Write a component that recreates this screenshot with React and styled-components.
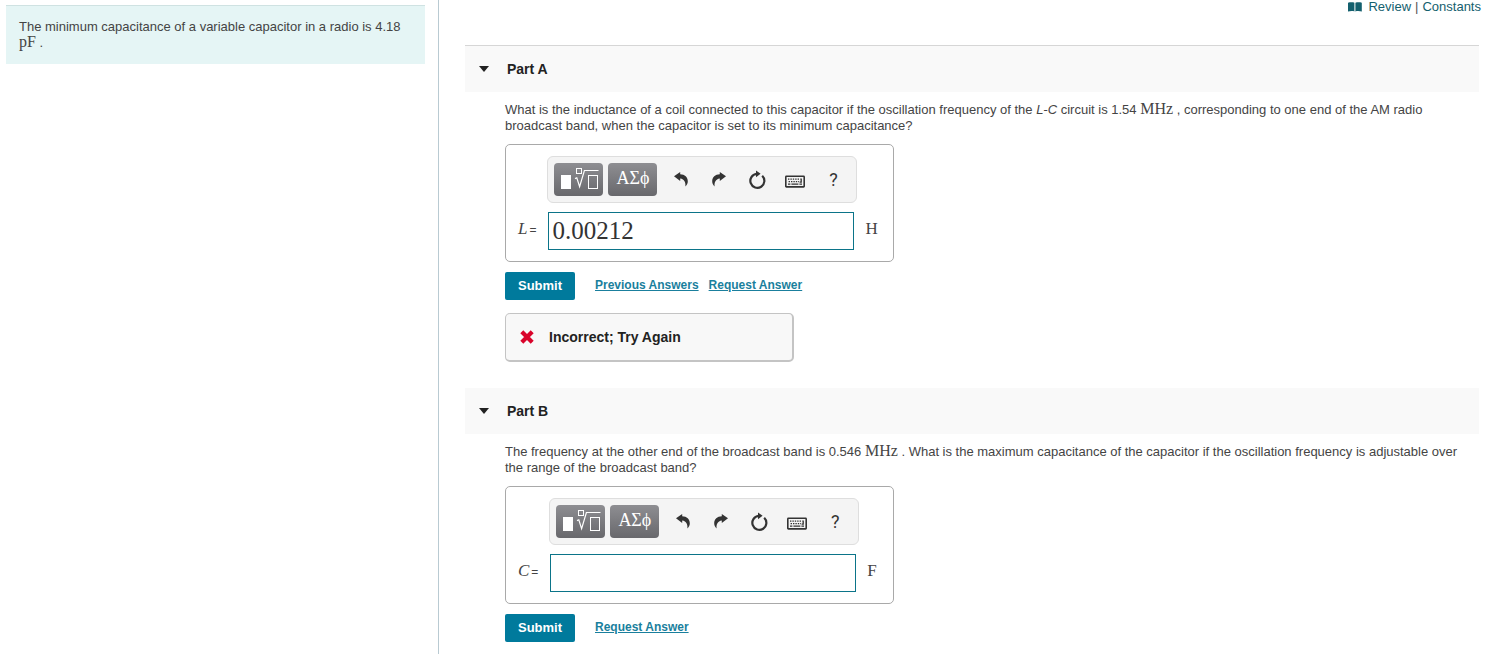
import React from "react";
import styled, { createGlobalStyle } from "styled-components";

const sans = `"Liberation Sans", Arial, sans-serif`;
const serif = `"Liberation Serif", "Times New Roman", serif`;

const GlobalStyle = createGlobalStyle`
  *, *::before, *::after { box-sizing: border-box; }
  body {
    margin: 0;
    background: #fff;
    color: #444;
    font: 13px/16px ${sans};
  }
  h2, p { margin: 0; }
`;

const Page = styled.div`
  display: flex;
  min-height: 100vh;
`;

const Sidebar = styled.aside`
  flex: 0 0 439px;
  padding: 5px 13px 0 6px;
  border-right: 1px solid #b9cad2;
`;

const Intro = styled.div`
  padding: 13px;
  border-top: 1px solid #cfe2e2;
  background: #e5f5f5;
`;

const Main = styled.main`
  flex: 1;
  min-width: 0;
  padding: 0 17px 12px 26px;
`;

const TopBar = styled.nav`
  display: flex;
  justify-content: flex-end;
  align-items: center;
  gap: 4px;
  height: 13px;
  margin: 0 -2px 32px 0;
  color: #555;

  svg { margin-right: 2px; }
`;

const TopLink = styled.a`
  color: #14606e;
  text-decoration: none;
`;

const Part = styled.section`
  margin-bottom: 26px;
`;

const PartHeader = styled.header`
  display: flex;
  align-items: center;
  height: ${(p) => (p.$ruled ? "47px" : "46px")};
  padding: 0 14px;
  border-top: ${(p) => (p.$ruled ? "1px solid #d6d6d6" : "none")};
  background: #f9f9f9;
`;

const Toggle = styled.button`
  display: flex;
  align-items: center;
  gap: 18px;
  padding: 0;
  border: 0;
  background: none;
  color: #222;
  font: bold 14px/16px ${sans};
`;

const PartBody = styled.div`
  padding: 10px 18px 0 40px;
`;

const Unit = styled.span`
  font-family: ${serif};
  font-size: 16px;
  line-height: 12px;
`;

const AnswerBox = styled.div`
  display: grid;
  grid-template-columns: auto 306px auto;
  justify-content: start;
  align-items: center;
  row-gap: 9px;
  width: fit-content;
  min-width: 389px;
  margin: 10px 0;
  padding: 11px;
  border: 1px solid #a9a9a9;
  border-radius: 5px;
`;

const Toolbar = styled.div`
  grid-column: 2 / 4;
  display: flex;
  align-items: center;
  width: 310px;
  height: 47px;
  margin-left: -1px;
  padding-left: 6px;
  border: 1px solid #dedede;
  border-radius: 6px;
  background: #f4f4f4;
`;

const PaletteButton = styled.button`
  display: flex;
  align-items: flex-start;
  justify-content: center;
  width: 49px;
  height: 33px;
  margin-right: 5px;
  padding: 0;
  border: 0;
  border-radius: 4px;
  background: linear-gradient(#8e8e92, #68686c);
  color: #fff;
  font: 18px/30px ${serif};
`;

const IconButton = styled.button`
  display: flex;
  align-items: center;
  justify-content: center;
  width: 38px;
  height: 33px;
  padding: 0;
  border: 0;
  background: none;
  color: #333;
  font: 18px/20px Roboto, ${sans};
`;

const FieldLabel = styled.label`
  padding: 0 12px 4px 1px;
  font-size: 12px;

  i {
    margin-right: 2px;
    font: italic 17px/20px ${serif};
  }
`;

const Field = styled.input`
  width: 100%;
  height: 38px;
  padding: 0 3px;
  border: 1px solid #0b7489;
  border-radius: 0;
  outline: 0;
  background: #fff;
  color: #333;
  font: 25px/34px ${serif};
`;

const FieldUnit = styled.span`
  padding: 0 0 4px 11px;
  font: 17px/20px ${serif};
`;

const Actions = styled.div`
  display: flex;
  align-items: center;
  gap: 10px;
`;

const Submit = styled.button`
  width: 70px;
  height: 28px;
  margin-right: 10px;
  padding: 0;
  border: 0;
  border-radius: 2px;
  background: #007a9c;
  color: #fff;
  font: bold 13px/16px ${sans};
`;

const ActionLink = styled.a`
  padding-bottom: 2px;
  color: #1a7f9d;
  font-size: 12px;
  font-weight: bold;
`;

const Feedback = styled.div`
  display: flex;
  align-items: center;
  gap: 15px;
  width: 289px;
  height: 49px;
  margin-top: 13px;
  padding: 0 14px;
  border: 1px solid #c4c4c4;
  border-right-width: 2px;
  border-bottom-width: 2px;
  border-radius: 5px;
  background: #f8f8f8;
  color: #222;
  font-size: 14px;
  font-weight: bold;
`;

const BookIcon = () => (
  <svg width="14" height="10" viewBox="0 0 14 10" fill="#14606e" aria-hidden="true">
    <path d="M0 0.8C2 0.2 5 0.2 6.4 0.8V9.4C5 8.9 2 8.9 0 9.6ZM7.4 0.8C9 0.2 12 0.2 13.8 0.8V9.6C12 8.9 9 8.9 7.4 9.4Z" />
  </svg>
);

const CaretIcon = () => (
  <svg width="10" height="6" viewBox="0 0 10 6" fill="#222" aria-hidden="true">
    <path d="M0 0H10L5 6Z" />
  </svg>
);

const TemplateIcon = () => (
  <svg width="49" height="33" viewBox="0 0 49 33" fill="none" stroke="#fff" aria-hidden="true">
    <rect x="7" y="12" width="10" height="14" fill="#fff" stroke="none" />
    <rect x="22.5" y="5.5" width="5" height="5" />
    <path d="M21 15.6L22.8 14.8L25.6 23.6L30.4 7.5H44.5" strokeWidth="1.2" />
    <rect x="34.5" y="12.5" width="9" height="13" />
  </svg>
);

const arrowPath =
  "M0 4.3L6.2 0V2.2C10.8 2.4 13.8 5 13.8 9.2C13.8 11.2 13 12.9 11.4 14.4C11.8 10.4 10.4 7.2 6.2 6.6V8.9Z";

const UndoIcon = () => (
  <svg width="14" height="15" viewBox="0 0 14 15" fill="currentColor" aria-hidden="true">
    <path d={arrowPath} />
  </svg>
);

const RedoIcon = () => (
  <svg width="14" height="15" viewBox="0 0 14 15" fill="currentColor" aria-hidden="true">
    <path d={arrowPath} transform="translate(14 0) scale(-1 1)" />
  </svg>
);

const ResetIcon = () => (
  <svg width="18" height="20" viewBox="0 0 18 20" fill="none" stroke="currentColor" aria-hidden="true">
    <path d="M14.2 5.8A7 7 0 1 1 8.6 3.9" strokeWidth="2.2" />
    <path d="M8 0.4L12.6 3.8L8 7.2Z" fill="currentColor" stroke="none" />
  </svg>
);

const KeyboardIcon = () => (
  <svg width="20" height="16" viewBox="0 0 20 16" fill="none" stroke="currentColor" aria-hidden="true">
    <rect x="0.8" y="4.3" width="18.4" height="10.6" rx="0.6" strokeWidth="1.6" />
    <path d="M3 7.2H15.4" strokeWidth="1.3" strokeDasharray="1.4 1" />
    <path d="M3.6 9.6H14" strokeWidth="1.3" strokeDasharray="1.4 1" />
    <path d="M3 12.2H5.4M6.4 12.2H13.4M14.4 12.2H17M16.2 6.6V10.2H14.6" strokeWidth="1.3" />
  </svg>
);

const CrossIcon = () => (
  <svg width="14" height="14" viewBox="0 0 14 14" stroke="#d9042b" strokeWidth="4.2" aria-hidden="true">
    <path d="M1.8 1.8L12.2 12.2M12.2 1.8L1.8 12.2" />
  </svg>
);

function Answer({ id, symbol, unit, value }) {
  return (
    <AnswerBox>
      <Toolbar role="toolbar" aria-label="Equation tools">
        <PaletteButton type="button" aria-label="Templates"><TemplateIcon /></PaletteButton>
        <PaletteButton type="button" aria-label="Symbols">ΑΣϕ</PaletteButton>
        <IconButton type="button" aria-label="Undo"><UndoIcon /></IconButton>
        <IconButton type="button" aria-label="Redo"><RedoIcon /></IconButton>
        <IconButton type="button" aria-label="Reset"><ResetIcon /></IconButton>
        <IconButton type="button" aria-label="Keyboard shortcuts"><KeyboardIcon /></IconButton>
        <IconButton type="button" aria-label="Help">?</IconButton>
      </Toolbar>
      <FieldLabel htmlFor={id}><i>{symbol}</i>=</FieldLabel>
      <Field id={id} type="text" defaultValue={value} />
      <FieldUnit>{unit}</FieldUnit>
    </AnswerBox>
  );
}

function PartSection({ title, ruled, question, answer, links, feedback }) {
  return (
    <Part>
      <PartHeader $ruled={ruled}>
        <Toggle type="button" aria-expanded="true"><CaretIcon />{title}</Toggle>
      </PartHeader>
      <PartBody>
        <p>{question}</p>
        <Answer {...answer} />
        <Actions>
          <Submit type="button">Submit</Submit>
          {links.map((text) => <ActionLink key={text} href="#">{text}</ActionLink>)}
        </Actions>
        {feedback && <Feedback role="status"><CrossIcon />{feedback}</Feedback>}
      </PartBody>
    </Part>
  );
}

export default function App() {
  return (
    <Page>
      <GlobalStyle />
      <Sidebar>
        <Intro>
          <p>The minimum capacitance of a variable capacitor in a radio is 4.18 <Unit>pF</Unit> .</p>
        </Intro>
      </Sidebar>
      <Main>
        <TopBar>
          <BookIcon />
          <TopLink href="#">Review</TopLink>|<TopLink href="#">Constants</TopLink>
        </TopBar>
        <PartSection
          title="Part A"
          ruled
          question={<>What is the inductance of a coil connected to this capacitor if the oscillation frequency of the <i>L-C</i> circuit is 1.54 <Unit>MHz</Unit> , corresponding to one end of the AM radio broadcast band, when the capacitor is set to its minimum capacitance?</>}
          answer={{ id: "inductance", symbol: "L", unit: "H", value: "0.00212" }}
          links={["Previous Answers", "Request Answer"]}
          feedback="Incorrect; Try Again"
        />
        <PartSection
          title="Part B"
          question={<>The frequency at the other end of the broadcast band is 0.546 <Unit>MHz</Unit> . What is the maximum capacitance of the capacitor if the oscillation frequency is adjustable over the range of the broadcast band?</>}
          answer={{ id: "capacitance", symbol: "C", unit: "F", value: "" }}
          links={["Request Answer"]}
        />
      </Main>
    </Page>
  );
}
